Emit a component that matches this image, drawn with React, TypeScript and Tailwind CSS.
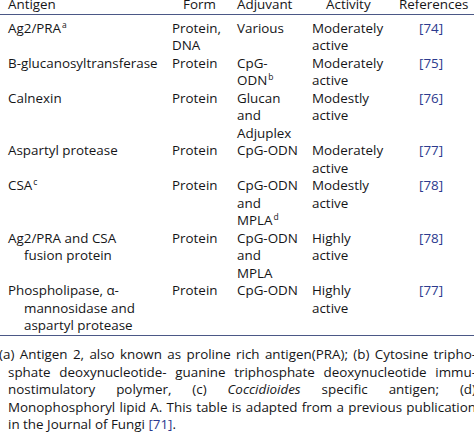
import type { ReactNode } from 'react'

type Row = {
  antigen: ReactNode[]
  form: ReactNode[]
  adjuvant: ReactNode[]
  activity: ReactNode[]
  ref: string
}

function Sup({ children }: { children: ReactNode }) {
  return <sup className="text-[8.5px] top-[-0.55em] ml-[1px]">{children}</sup>
}

const ROWS: Row[] = [
  {
    antigen: [<>Ag2/PRA<Sup>a</Sup></>],
    form: ['Protein,', 'DNA'],
    adjuvant: ['Various'],
    activity: ['Moderately', 'active'],
    ref: '[74]',
  },
  {
    antigen: ['B-glucanosyltransferase'],
    form: ['Protein'],
    adjuvant: ['CpG-', <>ODN<Sup>b</Sup></>],
    activity: ['Moderately', 'active'],
    ref: '[75]',
  },
  {
    antigen: ['Calnexin', '', ''],
    form: ['Protein'],
    adjuvant: ['Glucan', 'and', 'Adjuplex'],
    activity: ['Modestly', 'active'],
    ref: '[76]',
  },
  {
    antigen: ['Aspartyl protease', ''],
    form: ['Protein'],
    adjuvant: ['CpG-ODN'],
    activity: ['Moderately', 'active'],
    ref: '[77]',
  },
  {
    antigen: [<>CSA<Sup>c</Sup></>, '', ''],
    form: ['Protein'],
    adjuvant: ['CpG-ODN', 'and', <>MPLA<Sup>d</Sup></>],
    activity: ['Modestly', 'active'],
    ref: '[78]',
  },
  {
    antigen: ['Ag2/PRA and CSA', 'fusion protein', ''],
    form: ['Protein'],
    adjuvant: ['CpG-ODN', 'and', 'MPLA'],
    activity: ['Highly', 'active'],
    ref: '[78]',
  },
  {
    antigen: ['Phospholipase, α-', 'mannosidase and', 'aspartyl protease'],
    form: ['Protein'],
    adjuvant: ['CpG-ODN'],
    activity: ['Highly', 'active'],
    ref: '[77]',
  },
]

function Lines({ lines, hang = false }: { lines: ReactNode[]; hang?: boolean }) {
  return (
    <>
      {lines.map((l, i) => (
        <div key={i} className={`whitespace-nowrap h-[17.5px] ${hang && i > 0 ? 'pl-[16px]' : ''}`}>
          {l}
        </div>
      ))}
    </>
  )
}

const GRID = 'grid grid-cols-[172px_65px_75px_87px_75px]'

export default function App() {
  return (
    <div className="w-[474px] h-[435px] overflow-hidden bg-white text-[#151517] font-['Open_Sans','Noto_Sans',sans-serif] text-[13.4px] leading-[17.5px]">
      {/* Header */}
      <div className={`${GRID} -mt-[4px]`}>
        <div className="pl-[8px]">Antigen</div>
        <div className="pl-[11px]">Form</div>
        <div>Adjuvant</div>
        <div className="pl-[14px]">Activity</div>
        <div className="whitespace-nowrap">References</div>
      </div>
      <div className="h-[1.5px] bg-[#4b5886]" />

      {/* Body */}
      <div className="mt-[4.5px]">
        {ROWS.map((r, i) => (
          <div key={i} className={GRID}>
            <div className="pl-[8px]">
              <Lines lines={r.antigen} hang />
            </div>
            <div>
              <Lines lines={r.form} />
            </div>
            <div>
              <Lines lines={r.adjuvant} />
            </div>
            <div>
              <Lines lines={r.activity} />
            </div>
            <div className="pl-[20px] text-[#2c3a8e]">{r.ref}</div>
          </div>
        ))}
      </div>
      <div className="h-[1.5px] bg-[#4b5886]" />

      {/* Footnote */}
      <div className="mt-[10px] w-[477px] -ml-[1px]">
        <div className="text-justify [text-align-last:justify]">
          (a) Antigen 2, also known as proline rich antigen(PRA); (b) Cytosine tripho-
        </div>
        <div className="pl-[9px] text-justify [text-align-last:justify]">
          sphate deoxynucleotide- guanine triphosphate deoxynucleotide immu-
        </div>
        <div className="pl-[9px] text-justify [text-align-last:justify]">
          nostimulatory polymer, (c) <i>Coccidioides</i> specific antigen; (d)
        </div>
        <div className="pl-[9px] text-justify [text-align-last:justify]">
          Monophosphoryl lipid A. This table is adapted from a previous publication
        </div>
        <div className="pl-[9px]">
          in the Journal of Fungi <span className="text-[#2c3a8e]">[71]</span>.
        </div>
      </div>
    </div>
  )
}
